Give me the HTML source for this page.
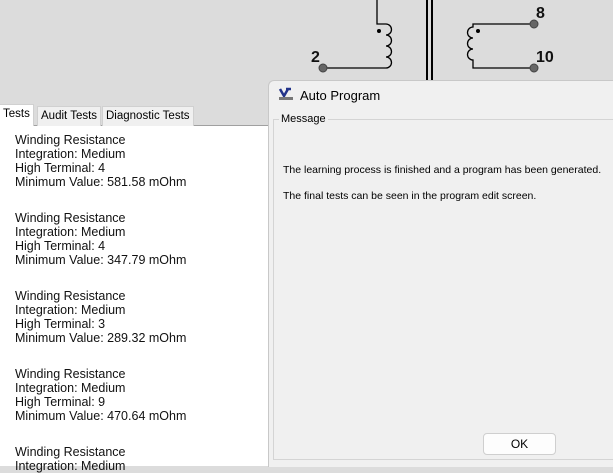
<!DOCTYPE html>
<html><head><style>
body{margin:0;width:613px;height:466px;overflow:hidden;background:#dcdcdc;font-family:"Liberation Sans",sans-serif;position:relative}
.abs{position:absolute}
.tabs{left:0;top:104px;width:268px;height:21px;background:#dcdcdc;border-bottom:1px solid #a0a0a0}
.tab{position:absolute;top:2px;height:19px;font-size:11.5px;line-height:19px;background:#f0f0f0;border:1px solid #d0d0d0;border-bottom:none;padding:0 3px;color:#000;white-space:nowrap}
.list{left:0;top:126px;width:268px;height:340px;background:#fff;font-size:12.5px;line-height:14px;color:#111}
.blk{position:absolute;left:15px}
.dlg{left:268px;top:80px;width:345px;height:386px;background:#f0f0f0;border-left:1px solid #c8c8c8;border-top:1px solid #c8c8c8;border-radius:6px 0 0 0}
.msg{font-size:10.5px;white-space:nowrap}
</style></head><body>
<svg class="abs" style="left:0;top:0" width="613" height="100">
<g stroke="#000" stroke-width="1.3" fill="none">
<line x1="427" y1="0" x2="427" y2="80" stroke-width="2"/><line x1="432" y1="0" x2="432" y2="80" stroke-width="2"/>
<path d="M377 0 V24 H386 M386 24 a5 5 0 0 1 0 11 a5 5 0 0 1 0 11 a5 5 0 0 1 0 11 a5 5 0 0 1 0 11 V68 H323"/>
<path d="M534 24 H473 V27 a5 5 0 0 0 0 11 a5 5 0 0 0 0 11 a5 5 0 0 0 0 11 V68 H534"/>
</g>
<circle cx="379" cy="31" r="2" fill="#000"/><circle cx="478" cy="31" r="2" fill="#000"/>
<g fill="#666" stroke="#444"><circle cx="323" cy="68" r="4"/><circle cx="534" cy="24" r="4"/><circle cx="534" cy="68" r="4"/></g>
<g font-weight="bold" font-size="16" fill="#111"><text x="311" y="62">2</text><text x="536" y="18">8</text><text x="536" y="62">10</text></g>
</svg>
<div class="abs tabs">
<div class="tab" style="left:-1px;top:0;height:21px;background:#fff">Tests</div>
<div class="tab" style="left:37px">Audit Tests</div>
<div class="tab" style="left:102px">Diagnostic Tests</div>
</div>
<div class="abs list">
<div class="blk" style="top:7px">Winding Resistance<br>Integration: Medium<br>High Terminal: 4<br>Minimum Value: 581.58 mOhm</div>
<div class="blk" style="top:85px">Winding Resistance<br>Integration: Medium<br>High Terminal: 4<br>Minimum Value: 347.79 mOhm</div>
<div class="blk" style="top:163px">Winding Resistance<br>Integration: Medium<br>High Terminal: 3<br>Minimum Value: 289.32 mOhm</div>
<div class="blk" style="top:241px">Winding Resistance<br>Integration: Medium<br>High Terminal: 9<br>Minimum Value: 470.64 mOhm</div>
<div class="blk" style="top:319px">Winding Resistance<br>Integration: Medium</div>
</div>
<div class="abs dlg">
<svg class="abs" style="left:9px;top:6px" width="16" height="14"><path d="M2 2 L6 9 L10 2 M8 2 L13 2" stroke="#22338a" stroke-width="2.5" fill="none"/><rect x="1" y="10" width="14" height="3" fill="#777"/></svg>
<div class="abs" style="left:31px;top:7px;font-size:13px;color:#000">Auto Program</div>
<div class="abs" style="left:4px;top:38px;width:340px;height:339px;border:1px solid #d4d4d4;border-right:none"></div>
<div class="abs" style="left:10px;top:32px;font-size:11px;background:#f0f0f0;padding:0 2px">Message</div>
<div class="abs msg" style="left:14px;top:83px">The learning process is finished and a program has been generated.</div>
<div class="abs msg" style="left:14px;top:109px">The final tests can be seen in the program edit screen.</div>
<div class="abs" style="left:214px;top:352px;width:71px;height:20px;background:#fdfdfd;border:1px solid #cfcfcf;border-radius:4px;font-size:12px;text-align:center;line-height:20px">OK</div>
</div>
</body></html>
